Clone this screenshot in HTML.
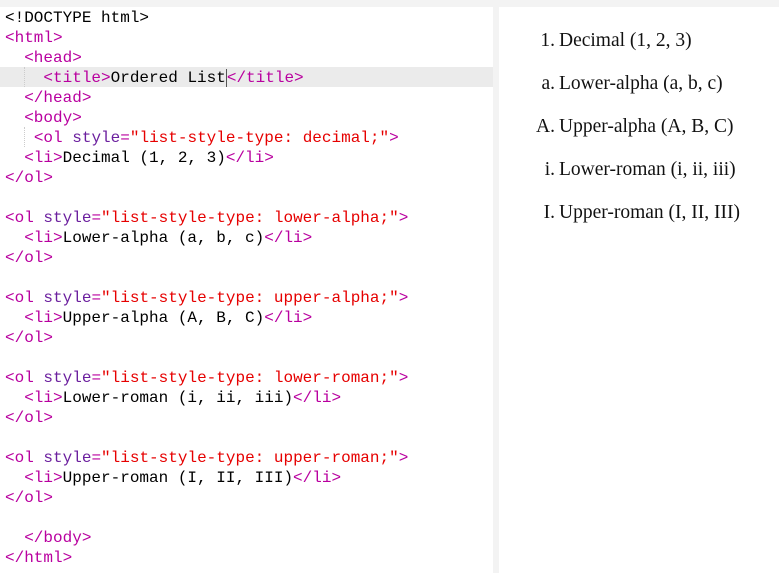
<!DOCTYPE html>
<html><head><style>
body{margin:0;width:779px;height:573px;background:#f3f3f3;position:relative;overflow:hidden}
#ed{position:absolute;left:0;top:7px;width:493px;height:566px;background:#fff}
#code{position:absolute;left:5px;top:1px;margin:0;font:16px/20px "Liberation Mono",monospace;color:#000;white-space:pre}
.hl{position:absolute;left:0;top:60px;width:493px;height:20px;background:#ebebeb}
.t{color:#b9009f}.a{color:#6b1f9e}.v{color:#e60000}
.g{position:absolute;width:0;border-left:1px dotted #ccc}
#pv{position:absolute;left:499px;top:7px;width:280px;height:566px;background:#fff;font:19.5px "Liberation Serif",serif;color:#111}
.r{position:absolute;left:0;width:280px}
.m{position:absolute;right:224px;text-align:right}
.x{position:absolute;left:60px;white-space:nowrap}
</style></head><body>
<div id="ed">
<div class="hl"></div>
<div class="g" style="left:24px;top:60px;height:20px"></div>
<div class="g" style="left:24px;top:120px;height:20px"></div>
<pre id="code">&lt;!DOCTYPE html&gt;
<span class="t">&lt;html&gt;</span>
  <span class="t">&lt;head&gt;</span>
    <span class="t">&lt;title&gt;</span>Ordered List<span style="border-left:1px solid #555"></span><span class="t">&lt;/title&gt;</span>
  <span class="t">&lt;/head&gt;</span>
  <span class="t">&lt;body&gt;</span>
   <span class="t">&lt;ol</span> <span class="a">style</span><span class="t">=</span><span class="v">"list-style-type: decimal;"</span><span class="t">&gt;</span>
  <span class="t">&lt;li&gt;</span>Decimal (1, 2, 3)<span class="t">&lt;/li&gt;</span>
<span class="t">&lt;/ol&gt;</span>

<span class="t">&lt;ol</span> <span class="a">style</span><span class="t">=</span><span class="v">"list-style-type: lower-alpha;"</span><span class="t">&gt;</span>
  <span class="t">&lt;li&gt;</span>Lower-alpha (a, b, c)<span class="t">&lt;/li&gt;</span>
<span class="t">&lt;/ol&gt;</span>

<span class="t">&lt;ol</span> <span class="a">style</span><span class="t">=</span><span class="v">"list-style-type: upper-alpha;"</span><span class="t">&gt;</span>
  <span class="t">&lt;li&gt;</span>Upper-alpha (A, B, C)<span class="t">&lt;/li&gt;</span>
<span class="t">&lt;/ol&gt;</span>

<span class="t">&lt;ol</span> <span class="a">style</span><span class="t">=</span><span class="v">"list-style-type: lower-roman;"</span><span class="t">&gt;</span>
  <span class="t">&lt;li&gt;</span>Lower-roman (i, ii, iii)<span class="t">&lt;/li&gt;</span>
<span class="t">&lt;/ol&gt;</span>

<span class="t">&lt;ol</span> <span class="a">style</span><span class="t">=</span><span class="v">"list-style-type: upper-roman;"</span><span class="t">&gt;</span>
  <span class="t">&lt;li&gt;</span>Upper-roman (I, II, III)<span class="t">&lt;/li&gt;</span>
<span class="t">&lt;/ol&gt;</span>

  <span class="t">&lt;/body&gt;</span>
<span class="t">&lt;/html&gt;</span></pre>
</div>
<div id="pv">
<div class="r" style="top:23px"><span class="m">1.</span><span class="x">Decimal (1, 2, 3)</span></div>
<div class="r" style="top:66px"><span class="m">a.</span><span class="x">Lower-alpha (a, b, c)</span></div>
<div class="r" style="top:109px"><span class="m">A.</span><span class="x">Upper-alpha (A, B, C)</span></div>
<div class="r" style="top:152px"><span class="m">i.</span><span class="x">Lower-roman (i, ii, iii)</span></div>
<div class="r" style="top:195px"><span class="m">I.</span><span class="x">Upper-roman (I, II, III)</span></div>
</div>
</body></html>
